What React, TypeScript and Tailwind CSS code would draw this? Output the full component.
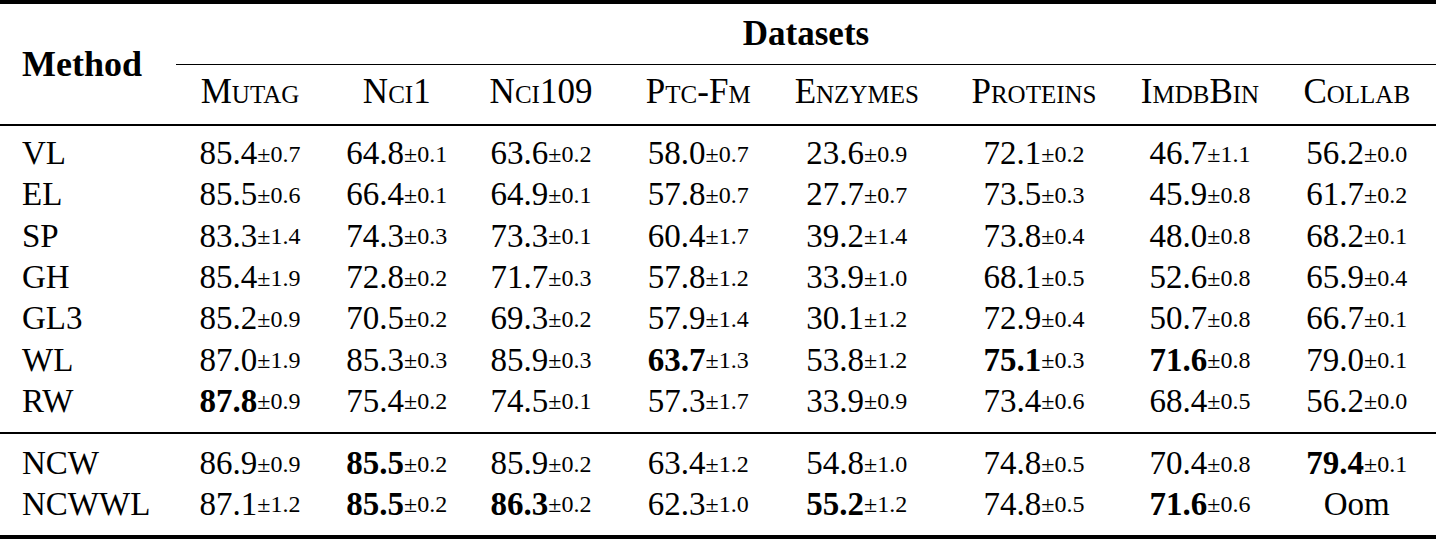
import React from 'react';

const cols = [
  { name: 'Mutag', pad: '' },
  { name: 'Nci1', pad: '' },
  { name: 'Nci109', pad: 'pr-[7px]' },
  { name: 'Ptc-Fm', pad: '' },
  { name: 'Enzymes', pad: 'pr-[9px]' },
  { name: 'Proteins', pad: 'pl-[5px]' },
  { name: 'ImdbBin', pad: 'pl-[5px]' },
  { name: 'Collab', pad: '' },
];

const gridCols = 'grid grid-cols-[176px_148px_145.5px_150px_157.5px_168.5px_172px_160px_158.5px]';

const baseline: [string, string[]][] = [
  ['VL', ['85.4±0.7', '64.8±0.1', '63.6±0.2', '58.0±0.7', '23.6±0.9', '72.1±0.2', '46.7±1.1', '56.2±0.0']],
  ['EL', ['85.5±0.6', '66.4±0.1', '64.9±0.1', '57.8±0.7', '27.7±0.7', '73.5±0.3', '45.9±0.8', '61.7±0.2']],
  ['SP', ['83.3±1.4', '74.3±0.3', '73.3±0.1', '60.4±1.7', '39.2±1.4', '73.8±0.4', '48.0±0.8', '68.2±0.1']],
  ['GH', ['85.4±1.9', '72.8±0.2', '71.7±0.3', '57.8±1.2', '33.9±1.0', '68.1±0.5', '52.6±0.8', '65.9±0.4']],
  ['GL3', ['85.2±0.9', '70.5±0.2', '69.3±0.2', '57.9±1.4', '30.1±1.2', '72.9±0.4', '50.7±0.8', '66.7±0.1']],
  ['WL', ['87.0±1.9', '85.3±0.3', '85.9±0.3', '*63.7±1.3', '53.8±1.2', '*75.1±0.3', '*71.6±0.8', '79.0±0.1']],
  ['RW', ['*87.8±0.9', '75.4±0.2', '74.5±0.1', '57.3±1.7', '33.9±0.9', '73.4±0.6', '68.4±0.5', '56.2±0.0']],
];

const ours: [string, string[]][] = [
  ['NCW', ['86.9±0.9', '*85.5±0.2', '85.9±0.2', '63.4±1.2', '54.8±1.0', '74.8±0.5', '70.4±0.8', '*79.4±0.1']],
  ['NCWWL', ['87.1±1.2', '*85.5±0.2', '*86.3±0.2', '62.3±1.0', '*55.2±1.2', '74.8±0.5', '*71.6±0.6', 'Oom']],
];

const Cell = ({ value, pad }: { value: string; pad: string }) => {
  const bold = value.startsWith('*');
  const raw = bold ? value.slice(1) : value;
  const [main, err] = raw.split('±');
  return (
    <div className={`flex items-center justify-center whitespace-nowrap ${pad}`}>
      <span className={bold ? 'font-bold' : ''}>{main}</span>
      {err !== undefined && <span className="text-[24px]">±{err}</span>}
    </div>
  );
};

const Rows = ({ rows, h }: { rows: [string, string[]][]; h: string }) => (
  <>
    {rows.map(([label, vals]) => (
      <div key={label} className={`${gridCols} ${h} items-center`}>
        <div className="pl-[22px]">{label}</div>
        {vals.map((v, i) => (
          <Cell key={i} value={v} pad={cols[i].pad} />
        ))}
      </div>
    ))}
  </>
);

export default function App() {
  return (
    <div className="w-[1436px] h-[541px] bg-white text-black font-['Liberation_Serif',serif] text-[33px] leading-[1.25]">
      <div className="border-t-4 border-b-4 border-black">
        {/* header */}
        <div className={`${gridCols} grid-rows-[61px_59px] border-b-2 border-black`}>
          <div className="row-span-2 flex items-center pl-[22px] text-[36px] font-bold">Method</div>
          <div className="col-span-8 flex items-center justify-center border-b border-black pb-[1px] text-[35px] font-bold">
            Datasets
          </div>
          {cols.map((c) => (
            <div
              key={c.name}
              className={`flex items-center justify-center pb-[5px] text-[35px] [font-variant:small-caps] ${c.pad}`}
            >
              {c.name}
            </div>
          ))}
        </div>

        <div className="pt-[7px] pb-[10px] border-b-2 border-black">
          <Rows rows={baseline} h="h-[41.3px]" />
        </div>

        <div className="pt-[9px] pb-[11px]">
          <Rows rows={ours} h="h-[40.5px]" />
        </div>
      </div>
    </div>
  );
}
